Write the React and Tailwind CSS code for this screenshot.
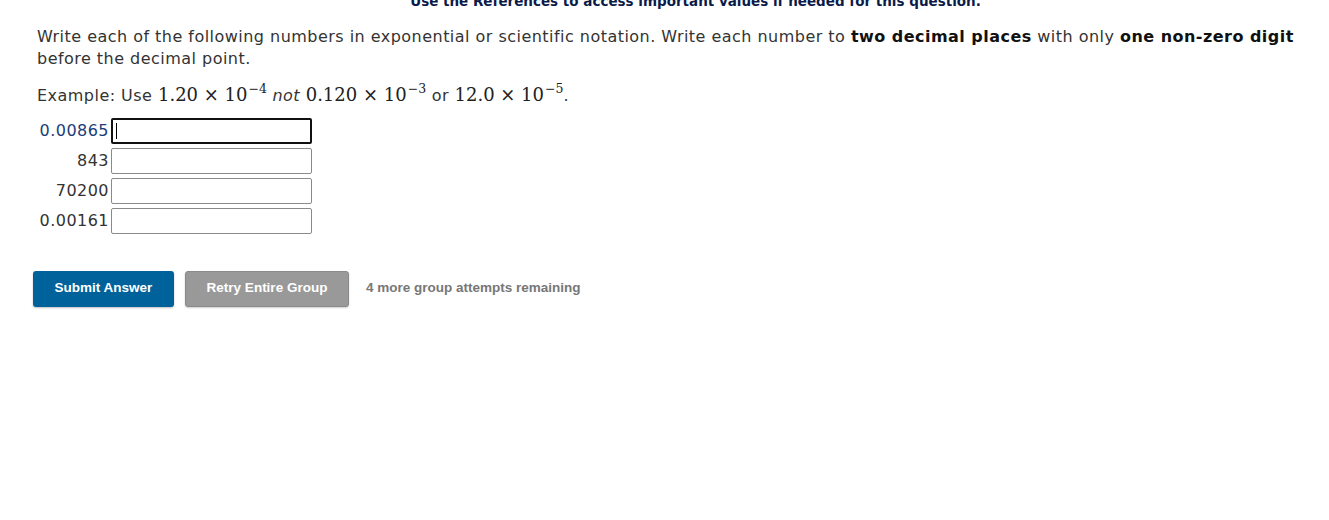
import React from "react";

function Sci({ m, e }) {
  return (
    <span className="font-['DejaVu_Serif','Liberation_Serif',serif] tracking-normal text-[18px] text-[#222]">
      {m} × 10<sup className="text-[12.5px] relative -top-[8px] ml-[1px]">−{e}</sup>
    </span>
  );
}

export default function App() {
  const rows = ["0.00865", "843", "70200", "0.00161"];
  return (
    <div className="w-[1329px] h-[520px] bg-white overflow-hidden font-['DejaVu_Sans',Verdana,sans-serif] text-[#333]">
      <div className="text-center font-bold text-[13.5px] text-[#0a1b4a] leading-none -mt-[5px] pl-[62px]">
        Use the References to access important values if needed for this question.
      </div>
      <div className="pl-[37px] pr-[20px] pt-[17px] text-[16px] tracking-[0.47px] leading-[22px] text-[#333]">
        <p>
          Write each of the following numbers in exponential or scientific notation. Write each number to{" "}
          <b className="text-[#111]">two decimal places</b> with only <b className="text-[#111]">one non-zero digit</b> before the decimal point.
        </p>
        <p className="mt-[14px]">
          Example: Use <Sci m="1.20" e="4" /> <i>not</i> <Sci m="0.120" e="3" /> or <Sci m="12.0" e="5" />.
        </p>
      </div>
      <div className="pl-[37px] mt-[11px] flex flex-col gap-[4px]">
        {rows.map((r, i) => (
          <div key={r} className="flex items-center">
            <div className={"w-[74px] text-right text-[16px] tracking-[0.47px] pr-[2px] " + (i === 0 ? "text-[#1c3d78]" : "text-[#333]")}>{r}</div>
            <div
              className={
                "w-[201px] h-[26px] bg-white rounded-[2px] " +
                (i === 0 ? "border-2 border-[#111] flex items-center pl-[3px]" : "border border-[#8a8a8a]")
              }
            >
              {i === 0 && <div className="w-px h-[16px] bg-black" />}
            </div>
          </div>
        ))}
      </div>
      <div className="pl-[33px] mt-[37px] flex items-center font-['Liberation_Sans',Arial,sans-serif] font-bold text-[13.5px]">
        <div className="w-[141px] h-[36px] bg-[#00629b] text-white rounded-[3px] flex items-center justify-center shadow-[0_1px_2px_rgba(0,0,0,0.25)]">
          Submit Answer
        </div>
        <div className="ml-[11px] w-[164px] h-[36px] bg-[#999] text-white rounded-[3px] border border-[#8a8a8a] flex items-center justify-center shadow-[0_1px_2px_rgba(0,0,0,0.2)]">
          Retry Entire Group
        </div>
        <div className="ml-[17px] text-[#777]">4 more group attempts remaining</div>
      </div>
    </div>
  );
}
